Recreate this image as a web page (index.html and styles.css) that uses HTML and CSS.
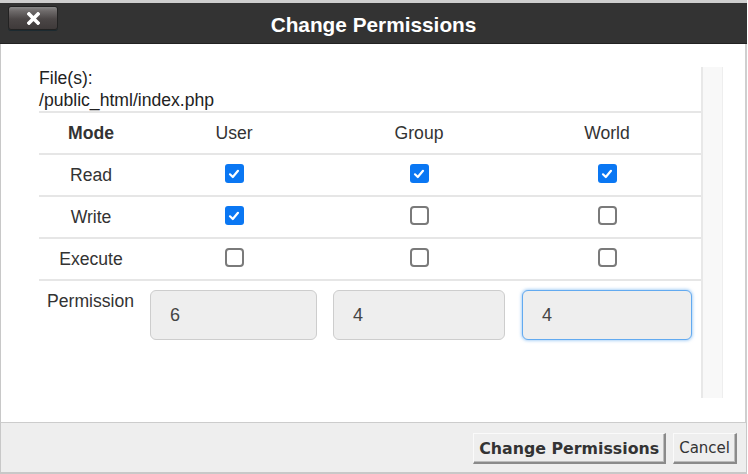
FILE: index.html
```html
<!DOCTYPE html>
<html>
<head>
<meta charset="utf-8">
<title>Change Permissions</title>
<link rel="stylesheet" href="styles.css">
</head>
<body>
<div class="dialog">
  <div class="titlebar">
    <button class="close-btn" aria-label="Close">
      <svg width="13" height="13" viewBox="0 0 13 13"><path d="M2 2 L11 11 M11 2 L2 11" stroke="#fff" stroke-width="3.6" stroke-linecap="square"/></svg>
    </button>
    <h1 class="title">Change Permissions</h1>
  </div>
  <div class="content">
    <div class="scrollarea">
      <div class="inner">
        <div class="files">
          <div>File(s):</div>
          <div>/public_html/index.php</div>
        </div>
        <div class="perm-table">
          <div class="row head">
            <div class="cell mode">Mode</div>
            <div class="cell">User</div>
            <div class="cell">Group</div>
            <div class="cell">World</div>
          </div>
          <div class="row">
            <div class="cell">Read</div>
            <div class="cell"><span class="cb on"><svg width="12" height="12" viewBox="0 0 12 12"><path d="M2 6.3 L4.8 9 L10 2.8" fill="none" stroke="#fff" stroke-width="2.2" stroke-linecap="round" stroke-linejoin="round"/></svg></span></div>
            <div class="cell"><span class="cb on"><svg width="12" height="12" viewBox="0 0 12 12"><path d="M2 6.3 L4.8 9 L10 2.8" fill="none" stroke="#fff" stroke-width="2.2" stroke-linecap="round" stroke-linejoin="round"/></svg></span></div>
            <div class="cell"><span class="cb on"><svg width="12" height="12" viewBox="0 0 12 12"><path d="M2 6.3 L4.8 9 L10 2.8" fill="none" stroke="#fff" stroke-width="2.2" stroke-linecap="round" stroke-linejoin="round"/></svg></span></div>
          </div>
          <div class="row">
            <div class="cell">Write</div>
            <div class="cell"><span class="cb on"><svg width="12" height="12" viewBox="0 0 12 12"><path d="M2 6.3 L4.8 9 L10 2.8" fill="none" stroke="#fff" stroke-width="2.2" stroke-linecap="round" stroke-linejoin="round"/></svg></span></div>
            <div class="cell"><span class="cb"></span></div>
            <div class="cell"><span class="cb"></span></div>
          </div>
          <div class="row">
            <div class="cell">Execute</div>
            <div class="cell"><span class="cb"></span></div>
            <div class="cell"><span class="cb"></span></div>
            <div class="cell"><span class="cb"></span></div>
          </div>
          <div class="row perm">
            <div class="cell label">Permission</div>
            <div class="cell"><div class="field">6</div></div>
            <div class="cell"><div class="field">4</div></div>
            <div class="cell"><div class="field focus">4</div></div>
          </div>
        </div>
      </div>
      <div class="track"></div>
    </div>
  </div>
  <div class="footer">
    <button class="btn primary">Change Permissions</button>
    <button class="btn">Cancel</button>
  </div>
</div>
</body>
</html>
```
FILE: styles.css
```css
* { box-sizing: border-box; }
html, body { margin: 0; padding: 0; background: #fff; }
body {
  font-family: "Liberation Sans", Arial, Helvetica, sans-serif;
  color: #333;
  width: 748px;
  height: 474px;
  overflow: hidden;
}
.dialog {
  width: 747px;
  height: 474px;
  display: flex;
  flex-direction: column;
}
.titlebar {
  height: 44px;
  flex: none;
  background: #333;
  border-top: 3px solid #cfcfcf;
  border-bottom: 1px solid #222;
  display: flex;
  align-items: center;
  justify-content: center;
  padding-top: 3px;
  position: relative;
}
.title {
  margin: 0;
  color: #fff;
  font-size: 20.8px;
  font-weight: bold;
}
.close-btn {
  position: absolute;
  left: 8px;
  top: 3px;
  width: 50px;
  height: 24px;
  border: 1px solid #222;
  border-radius: 3px;
  background: linear-gradient(#8a8a8a 0, #6e6a6a 18%, #4b4646 55%, #3f3a3a 100%);
  box-shadow: 0 1px 0 #1c2a30;
  display: flex;
  align-items: center;
  justify-content: center;
  padding: 0;
}
.content {
  flex: 1;
  border-left: 1px solid #c8c8c8;
  border-right: 2px solid #cfcfcf;
  padding: 23px 0 0 38px;
}
.scrollarea {
  display: flex;
  height: 331px;
}
.inner {
  width: 662px;
  flex: none;
}
.files {
  font-size: 17.6px;
  line-height: 22px;
  color: #222;
}
.perm-table {
  border-top: 2px solid #e6e6e6;
}
.row {
  display: grid;
  grid-template-columns: 104px 182px 188px 188px;
  height: 42px;
  border-bottom: 2px solid #e6e6e6;
}
.cell {
  display: flex;
  align-items: center;
  justify-content: center;
  font-size: 17.6px;
  color: #333;
}
.cell.mode { font-weight: bold; }
.cb {
  width: 19px;
  height: 19px;
  margin-top: -3px;
  border-radius: 4px;
  border: 2px solid #7a7a7a;
  background: #fff;
  display: flex;
  align-items: center;
  justify-content: center;
}
.cb.on {
  border: none;
  background: #0a77f3;
  border-radius: 3px;
}
.row.perm {
  height: auto;
  border-bottom: none;
  padding-top: 9px;
}
.row.perm .cell {
  padding: 0 8px;
  align-items: stretch;
}
.row.perm .cell.label {
  justify-content: flex-start;
  align-items: flex-start;
  padding-top: 1px;
  line-height: 20px;
}
.row.perm .cell:nth-child(2) { padding-left: 7px; padding-right: 8px; }
.row.perm .cell:nth-child(4) { padding-left: 9px; padding-right: 9px; }
.field {
  width: 100%;
  height: 50px;
  border: 1px solid #cdcdcd;
  border-radius: 6px;
  background: #eeeeee;
  font-size: 18px;
  color: #444;
  display: flex;
  align-items: center;
  padding-left: 19px;
}
.field.focus {
  border-color: #62aaf0;
  box-shadow: 0 0 3px 1px rgba(110, 175, 240, 0.55);
}
.track {
  width: 22px;
  flex: none;
  background: #f8f8f8;
  border-left: 2px solid #e8e8e8;
  border-right: 1px solid #eeeeee;
}
.footer {
  height: 52px;
  flex: none;
  background: #eeeeee;
  border-top: 1px solid #cccccc;
  border-left: 1px solid #c8c8c8;
  border-right: 1px solid #c8c8c8;
  border-bottom: 2px solid #c8c8c8;
  display: flex;
  justify-content: flex-end;
  align-items: flex-start;
  padding: 10px 9px 0 0;
  gap: 7px;
}
.btn {
  font-family: "DejaVu Sans", Verdana, sans-serif;
  font-size: 15px;
  height: 31px;
  padding: 0 5px;
  color: #333;
  background: #eeeeee;
  border-style: solid;
  border-width: 1px 2px 2px 1px;
  border-color: #fafafa #8a8a8a #8a8a8a #fafafa;
  box-shadow: inset -1px -1px 0 #bcbcbc;
}
.btn.primary {
  font-weight: bold;
  font-size: 15.8px;
  padding: 0 5px;
}
```
